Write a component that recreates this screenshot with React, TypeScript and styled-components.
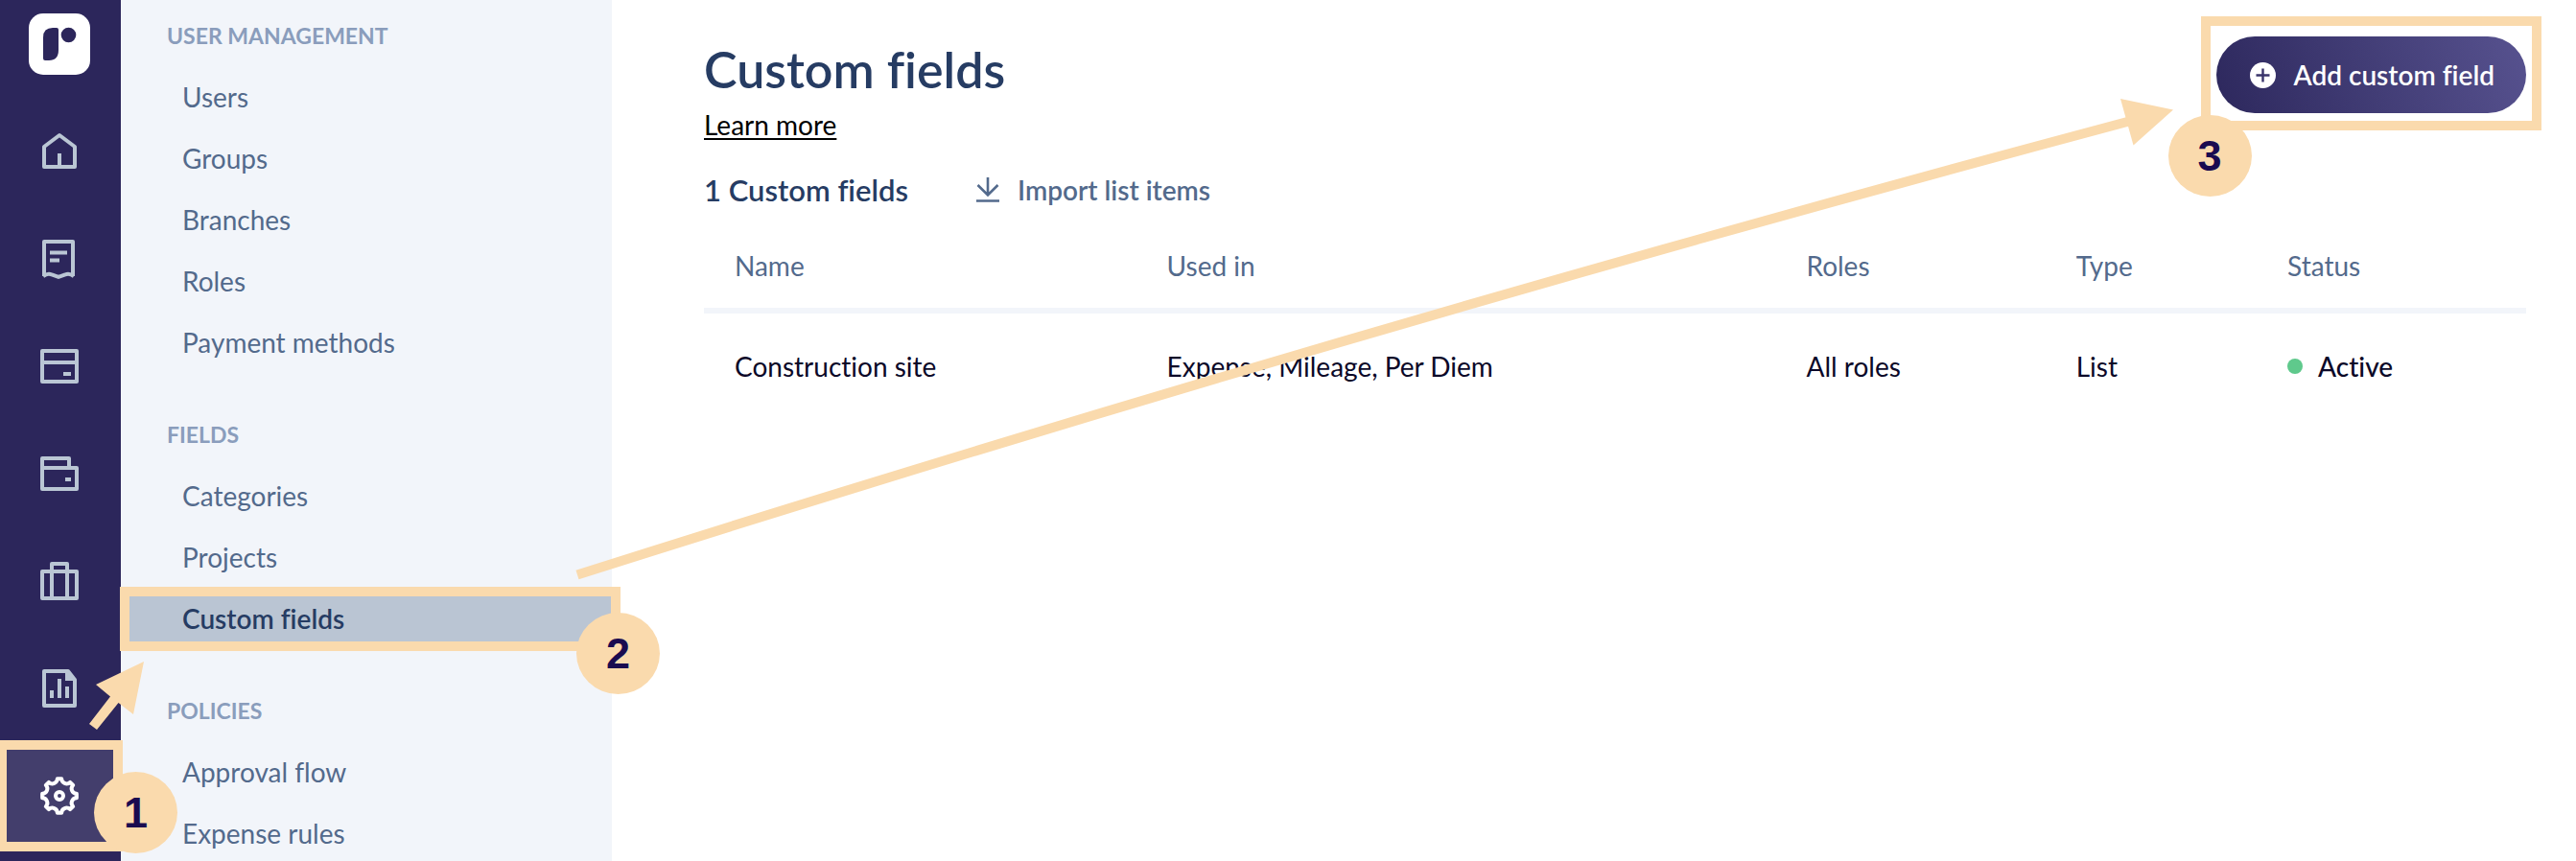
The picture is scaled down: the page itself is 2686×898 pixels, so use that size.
import React from "react";
import styled, { createGlobalStyle } from "styled-components";

const color = {
  rail: "#2c265b",
  railActive: "#433e6c",
  railIcon: "#bac6d4",
  nav: "#f2f5fa",
  navActive: "#bac5d3",
  heading: "#8a9dbc",
  muted: "#536a8c",
  navy: "#263c63",
  text: "#0b0828",
  green: "#5fc98c",
  peach: "#fadaad",
  digit: "#1a0b50",
};

const GlobalStyle = createGlobalStyle`
  * { box-sizing: border-box; }
  body {
    margin: 0;
    background: #fff;
    font-family: Lato, "Open Sans", sans-serif;
    font-variant-ligatures: none;
    font-size: 28px;
    line-height: 36px;
    color: ${color.text};
  }
`;

const Page = styled.div`
  position: relative;
  display: flex;
  height: 100vh;
  overflow: hidden;
`;

/* ---------- icon rail ---------- */

const Rail = styled.nav`
  display: flex;
  flex-direction: column;
  flex: none;
  width: 126px;
  padding-top: 14px;
  background: ${color.rail};
`;

const LogoLink = styled.a`
  display: block;
  height: 64px;
  margin: 0 0 24px 30px;
`;

const RailItem = styled.div`
  position: relative;
  flex: none;
`;

const RailLink = styled.a<{ $active?: boolean }>`
  display: flex;
  align-items: center;
  justify-content: center;
  height: 112px;
  padding-right: 2px;
  color: ${(p) => (p.$active ? "#fff" : color.railIcon)};
  background: ${(p) => (p.$active ? color.railActive : "transparent")};
`;

/* ---------- settings navigation ---------- */

const SideNav = styled.nav`
  flex: none;
  width: 512px;
  padding-top: 18px;
  background: ${color.nav};
`;

const NavSection = styled.section`
  & + & {
    margin-top: 44px;
  }
`;

const NavHeading = styled.h2`
  margin: 0 0 14px;
  padding-left: 48px;
  font-size: 23px;
  line-height: 38px;
  font-weight: 700;
  text-transform: uppercase;
  color: ${color.heading};
`;

const NavList = styled.ul`
  margin: 0;
  padding: 0;
  list-style: none;
`;

const NavItem = styled.li`
  position: relative;
`;

const NavLink = styled.a<{ $active?: boolean }>`
  display: block;
  padding: 0 0 2px 64px;
  line-height: 62px;
  text-decoration: none;
  font-weight: ${(p) => (p.$active ? 600 : 400)};
  color: ${(p) => (p.$active ? color.navy : color.muted)};
  background: ${(p) => (p.$active ? color.navActive : "transparent")};
`;

/* ---------- content ---------- */

const Main = styled.main`
  flex: 1;
  min-width: 0;
  padding: 38px 52px 0 96px;
`;

const Header = styled.header`
  display: flex;
  align-items: flex-start;
  justify-content: space-between;
`;

const Title = styled.h1`
  margin: 0 0 6px;
  font-size: 52px;
  line-height: 68px;
  font-weight: 600;
  color: ${color.navy};
`;

const LearnMore = styled.a`
  display: inline-block;
  color: #000;
  text-decoration: underline;
  text-decoration-thickness: 2px;
  text-underline-offset: 3px;
`;

const AddWrap = styled.div`
  position: relative;
  flex: none;
`;

const AddButton = styled.button`
  display: flex;
  align-items: center;
  gap: 19px;
  height: 80px;
  padding: 0 33px 0 35px;
  border: 0;
  border-radius: 40px;
  background: linear-gradient(70deg, #2d285d, #57528f);
  color: #fff;
  font: inherit;
  font-weight: 600;
`;

const Toolbar = styled.div`
  display: flex;
  align-items: center;
  gap: 71px;
  margin-top: 30px;
  height: 40px;
`;

const Count = styled.h2`
  margin: 0;
  font-size: 31px;
  line-height: 40px;
  font-weight: 600;
  color: ${color.navy};
`;

const ImportButton = styled.button`
  display: flex;
  align-items: center;
  gap: 19px;
  padding: 0;
  border: 0;
  background: none;
  color: ${color.muted};
  font: inherit;
  font-weight: 600;
`;

const Table = styled.table`
  width: 100%;
  margin-top: 24px;
  table-layout: fixed;
  border-collapse: separate;
  border-spacing: 0;
  text-align: left;
`;

const Col = styled.col<{ $share: number }>`
  width: ${(p) => p.$share}%;
`;

const HeadCell = styled.th`
  padding: 17px 0 26px;
  border-bottom: 6px solid ${color.nav};
  font-weight: 400;
  color: ${color.muted};
  &:first-child {
    padding-left: 32px;
  }
`;

const Cell = styled.td`
  padding: 37px 0;
  &:first-child {
    padding-left: 32px;
  }
`;

const Status = styled.span`
  display: flex;
  align-items: center;
  gap: 16px;
  font-weight: 500;
  &::before {
    content: "";
    width: 16px;
    height: 16px;
    border-radius: 50%;
    background: ${color.green};
  }
`;

/* ---------- walkthrough marks, drawn over the page ---------- */

const Frame = styled.span<{ $inset: string }>`
  position: absolute;
  inset: ${(p) => p.$inset};
  z-index: 2;
  border: 10px solid ${color.peach};
  pointer-events: none;
`;

const Step = styled.span<{ $top: number; $left?: number; $right?: number }>`
  position: absolute;
  top: ${(p) => p.$top}px;
  left: ${(p) => (p.$left === undefined ? "auto" : `${p.$left}px`)};
  right: ${(p) => (p.$right === undefined ? "auto" : `${p.$right}px`)};
  z-index: 3;
  display: flex;
  align-items: center;
  justify-content: center;
  width: 87px;
  height: 85px;
  border-radius: 50%;
  background: ${color.peach};
  color: ${color.digit};
  font-family: "Liberation Sans", Arial, sans-serif;
  font-size: 45px;
  line-height: 52px;
  font-weight: 700;
  pointer-events: none;
`;

const ShortArrow = styled.svg`
  position: absolute;
  left: 90px;
  top: -88px;
  z-index: 2;
  pointer-events: none;
`;

const LongArrow = styled.svg`
  position: absolute;
  left: 0;
  top: 0;
  width: 100%;
  z-index: 2;
  pointer-events: none;
`;

/* ---------- icons ---------- */

const RailIcon = ({ children }: { children: React.ReactNode }) => (
  <svg width="48" height="48" viewBox="0 0 48 48" fill="none" stroke="currentColor" strokeWidth="4" strokeLinejoin="round" aria-hidden="true">
    {children}
  </svg>
);

const polar = (deg: number, r: number) => {
  const a = (deg * Math.PI) / 180;
  return `${(24 + r * Math.cos(a)).toFixed(2)} ${(24 + r * Math.sin(a)).toFixed(2)}`;
};

const gearPath =
  Array.from({ length: 8 }, (_, i) => {
    const a = i * 45;
    return `${i ? "L" : "M"}${polar(a - 7, 18)}L${polar(a + 7, 18)}A5.2 5.2 0 0 0 ${polar(a + 38, 18)}`;
  }).join("") + "Z";

const railItems = [
  {
    label: "Home",
    icon: <path d="M8 19 24 7l16 12v21H8ZM24 26v14" />,
  },
  {
    label: "Expenses",
    icon: (
      <>
        <path d="M8 42V6h30v36" />
        <path strokeLinejoin="miter" d="M7 42q5-3.500 9-1.500l7 2.500 7-2.500q4-2 9 1.500" />
        <path d="M14 17.500h18M14 25.500h10" />
      </>
    ),
  },
  {
    label: "Cards",
    icon: <path d="M6 8h36v32H6ZM6 20h36M28 32h8" />,
  },
  {
    label: "Wallet",
    icon: <path d="M6 18V8h28v10M6 18h36v22H6ZM30 30h6" />,
  },
  {
    label: "Travel",
    icon: <path d="M6 14h36v28H6ZM16 42V6h16v36" />,
  },
  {
    label: "Reports",
    icon: (
      <>
        <path d="M8 6h25l7 9v27H8Z" />
        <path d="M30 6h4l7 10H30Z" fill="currentColor" stroke="none" />
        <path d="M16 34v-8M24 34V14M32 34V22" />
      </>
    ),
  },
];

const Logo = () => (
  <svg width="64" height="64" viewBox="0 0 64 64" aria-hidden="true">
    <rect width="64" height="64" rx="15" fill="#fff" />
    <path d="M15 25q0-10 10-10h4q2 0 2 2v21q0 11-10 11h-4q-2 0-2-2Z" fill={color.rail} />
    <circle cx="41.500" cy="22.500" r="7.800" fill={color.rail} />
  </svg>
);

/* ---------- data ---------- */

const sections = [
  { title: "User management", items: ["Users", "Groups", "Branches", "Roles", "Payment methods"] },
  { title: "Fields", items: ["Categories", "Projects", "Custom fields"] },
  { title: "Policies", items: ["Approval flow", "Expense rules"] },
];

const columns = [
  { name: "Name", share: 25.4 },
  { name: "Used in", share: 35.1 },
  { name: "Roles", share: 14.8 },
  { name: "Type", share: 11.6 },
  { name: "Status", share: 13.1 },
];

export default function App() {
  return (
    <>
      <GlobalStyle />
      <Page>
        <Rail aria-label="Main">
          <LogoLink href="#" aria-label="Start">
            <Logo />
          </LogoLink>
          {railItems.map((item) => (
            <RailItem key={item.label}>
              <RailLink href="#" aria-label={item.label}>
                <RailIcon>{item.icon}</RailIcon>
              </RailLink>
            </RailItem>
          ))}
          <RailItem>
            <RailLink href="#" aria-label="Settings" aria-current="page" $active>
              <RailIcon>
                <path d={gearPath} />
                <circle cx="24" cy="24" r="4" />
              </RailIcon>
            </RailLink>
            <Frame $inset="-2px -2px -2px -3px" />
            <Step $top={31} $left={98}>1</Step>
            <ShortArrow width="64" height="80" fill={color.peach} aria-hidden="true">
              <path d="M60 4 49 59 33.500 47 11 75 3 69 25 40.500 10 28Z" />
            </ShortArrow>
          </RailItem>
        </Rail>

        <SideNav aria-label="Settings">
          {sections.map((section) => (
            <NavSection key={section.title}>
              <NavHeading>{section.title}</NavHeading>
              <NavList>
                {section.items.map((item) => {
                  const active = item === "Custom fields";
                  return (
                    <NavItem key={item}>
                      <NavLink href="#" $active={active}>{item}</NavLink>
                      {active && (
                        <>
                          <Frame $inset="-2px -9px -1px -1px" />
                          <Step $top={25} $right={-50}>2</Step>
                        </>
                      )}
                    </NavItem>
                  );
                })}
              </NavList>
            </NavSection>
          ))}
        </SideNav>

        <Main>
          <Header>
            <div>
              <Title>Custom fields</Title>
              <LearnMore href="#">Learn more</LearnMore>
            </div>
            <AddWrap>
              <AddButton type="button">
                <svg width="27" height="27" viewBox="0 0 27 27" aria-hidden="true">
                  <circle cx="13.500" cy="13.500" r="13.500" fill="#fff" />
                  <path d="M13.500 6.500v14M6.500 13.500h14" stroke="#38336a" strokeWidth="2.400" />
                </svg>
                Add custom field
              </AddButton>
              <Frame $inset="-21px -16px -18px -16px" />
              <Step $top={82} $left={-50}>3</Step>
            </AddWrap>
          </Header>

          <Toolbar>
            <Count>1 Custom fields</Count>
            <ImportButton type="button">
              <svg width="24" height="26" viewBox="0 0 24 26" fill="none" stroke="currentColor" strokeWidth="2.600" aria-hidden="true">
                <path d="M12 0v18M1.500 8 12 18.500 22.500 8M0 24.500h24" />
              </svg>
              Import list items
            </ImportButton>
          </Toolbar>

          <Table>
            <colgroup>
              {columns.map((c) => (
                <Col key={c.name} $share={c.share} />
              ))}
            </colgroup>
            <thead>
              <tr>
                {columns.map((c) => (
                  <HeadCell key={c.name} scope="col">{c.name}</HeadCell>
                ))}
              </tr>
            </thead>
            <tbody>
              <tr>
                <Cell>Construction site</Cell>
                <Cell>Expense, Mileage, Per Diem</Cell>
                <Cell>All roles</Cell>
                <Cell>List</Cell>
                <Cell>
                  <Status>Active</Status>
                </Cell>
              </tr>
            </tbody>
          </Table>
        </Main>

        <LongArrow viewBox="0 0 2686 898" aria-hidden="true">
          <path d="M602 599.500Q1410 343 2220 126.500" fill="none" stroke={color.peach} strokeWidth="10" />
          <path d="M2211 103 2266 114.500 2224.500 151.500Z" fill={color.peach} />
        </LongArrow>
      </Page>
    </>
  );
}
